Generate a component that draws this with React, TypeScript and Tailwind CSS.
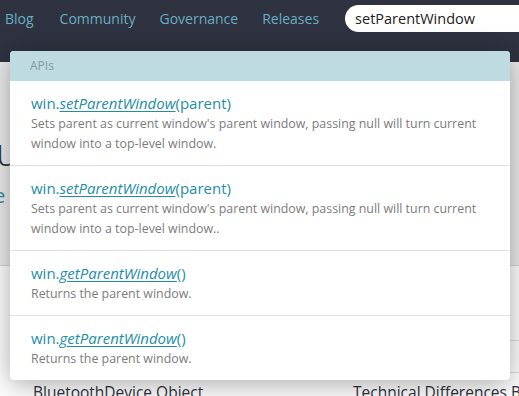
import React from "react";

const items = [
  { name: "setParentWindow", args: "(parent)", desc: "Sets parent as current window's parent window, passing null will turn current window into a top-level window." },
  { name: "setParentWindow", args: "(parent)", desc: "Sets parent as current window's parent window, passing null will turn current window into a top-level window.." },
  { name: "getParentWindow", args: "()", desc: "Returns the parent window." },
  { name: "getParentWindow", args: "()", desc: "Returns the parent window." },
];

export default function App() {
  return (
    <div
      className="relative w-[519px] h-[396px] overflow-hidden bg-white"
      style={{ fontFamily: '"Open Sans", "Noto Sans", sans-serif' }}
    >
      <nav className="h-[62px] bg-[#2f3241] flex items-start pl-[5px] pt-[7px] gap-[24px] text-[14px] text-[#6aaec0]">
        <span className="leading-[24px] mr-[2px]">Blog</span>
        <span className="leading-[24px]">Community</span>
        <span className="leading-[24px]">Governance</span>
        <span className="leading-[24px]">Releases</span>
        <div className="ml-[2px] mt-[-2px] h-[27px] flex-1 rounded-l-full bg-white pl-[10px] text-[14.5px] leading-[27px] text-[#222]">
          setParentWindow
        </div>
      </nav>

      <main className="bg-[#ececec]">
        <div className="h-[203px] pt-[70px]">
          <div className="ml-[-4px] text-[38px] leading-[38px] font-light text-[#2f3241]">u</div>
          <div className="ml-[-6px] mt-[14px] text-[20px] leading-[24px] text-[#2b8ea3]">e</div>
        </div>
        <div className="border-t border-[#d6d6d6] bg-white">
          <div className="grid grid-cols-[320px_1fr] h-[131px]">
            <div className="flex flex-col justify-end pl-[33px]">
              <span className="text-[15.5px] leading-[24px] text-[#2f3241] whitespace-nowrap translate-y-[7px]">BluetoothDevice Object</span>
            </div>
            <div className="flex flex-col justify-end pl-[33px]">
              <div className="border-t border-[#dcdcdc] h-[24px] flex items-center justify-end text-[22px] text-[#2f3241] mb-[8px]">
                <span className="mr-[2px]">(</span>
              </div>
              <div className="border-t border-[#dcdcdc]"></div>
              <span className="text-[15.5px] leading-[24px] text-[#2f3241] whitespace-nowrap translate-y-[7px]">Technical Differences Between</span>
            </div>
          </div>
        </div>
      </main>

      <div className="absolute left-[10px] top-[51px] w-[500px] rounded-[4px] overflow-hidden bg-white shadow-[0_4px_28px_rgba(0,0,0,0.35)]">
        <div className="h-[30px] bg-[#bddbe0] pl-[20px] text-[12px] leading-[30px] text-[#86999d]">APIs</div>
        {items.map((it, i) => (
          <div
            key={i}
            className={`px-[21px] py-[11px] ${i < items.length - 1 ? "border-b border-[#e2e2e2]" : ""}`}
          >
            <div className="text-[15px] leading-[22px] text-[#1e8ea6]">
              win.<span className="italic underline underline-offset-2">{it.name}</span>
              {it.args}
            </div>
            <div className="text-[12.4px] leading-[20px] text-[#7c7c7c]">{it.desc}</div>
          </div>
        ))}
      </div>
    </div>
  );
}
